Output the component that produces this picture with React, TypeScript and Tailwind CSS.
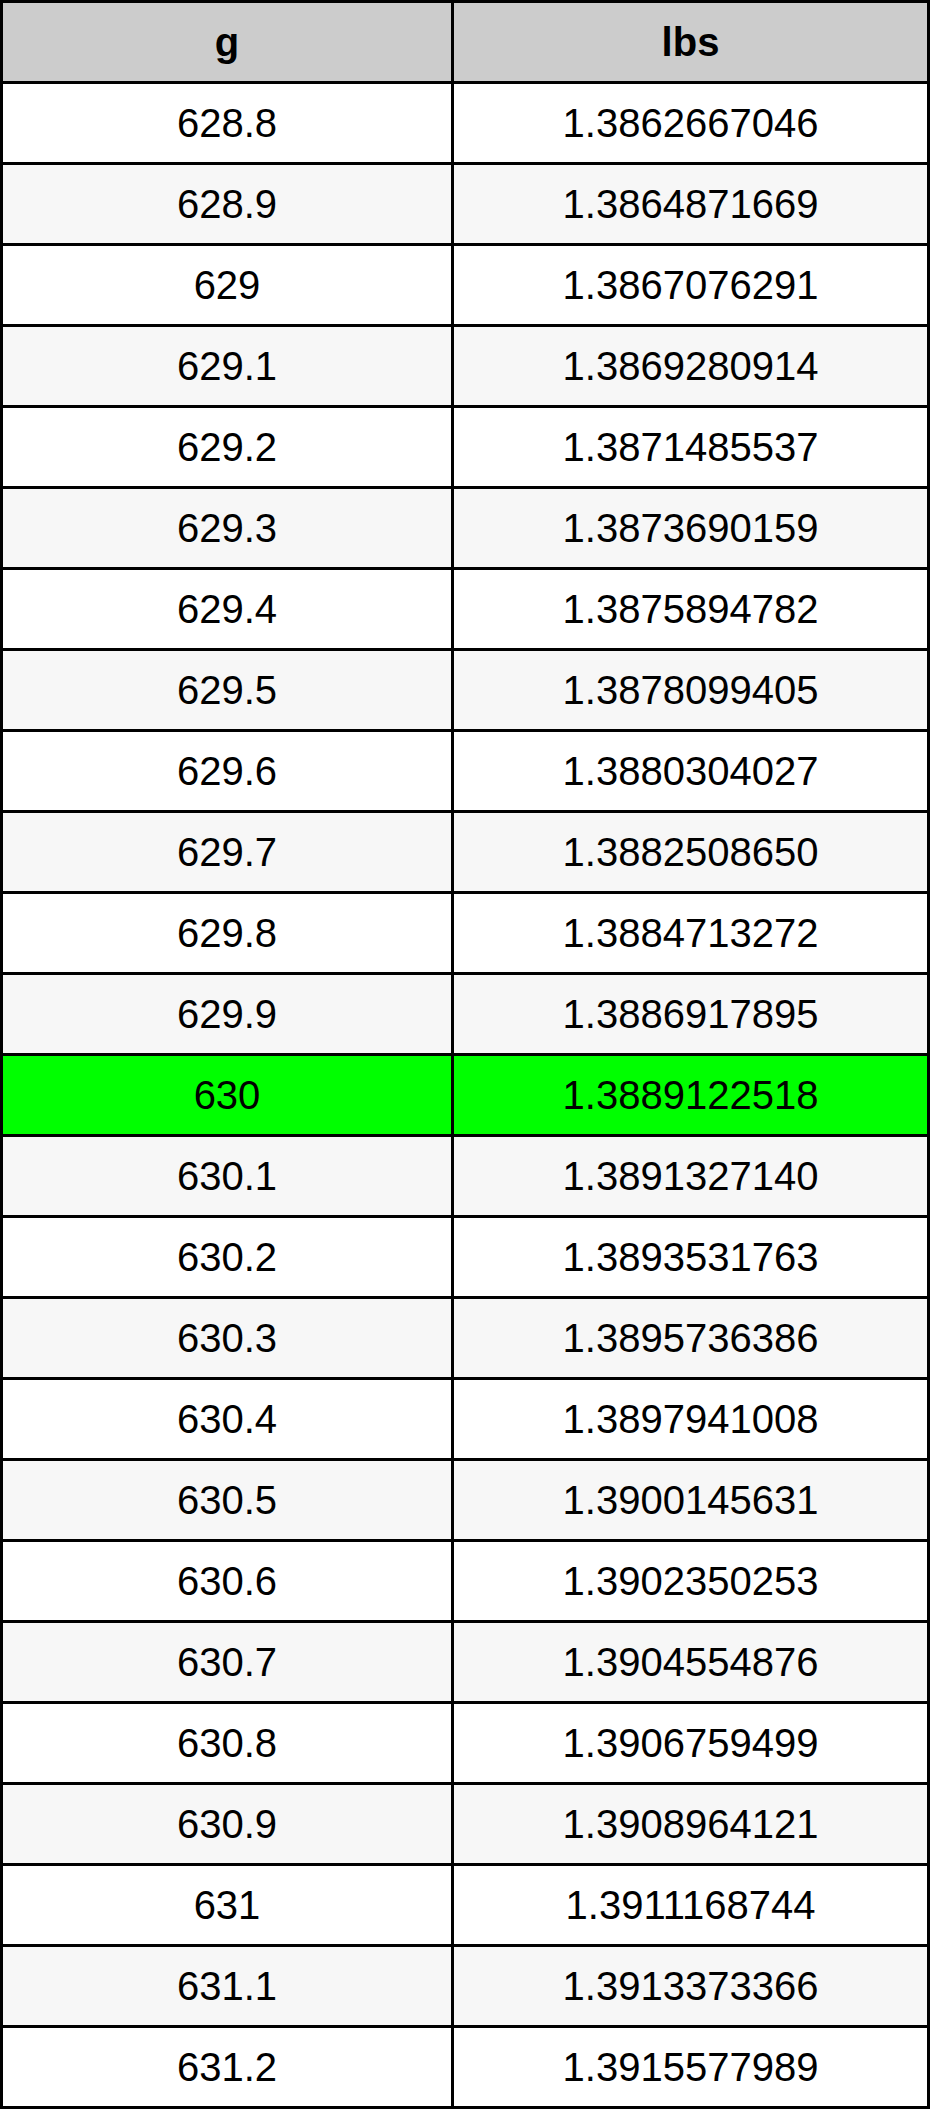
const rows: [string, string][] = [
  ["628.8", "1.3862667046"],
  ["628.9", "1.3864871669"],
  ["629", "1.3867076291"],
  ["629.1", "1.3869280914"],
  ["629.2", "1.3871485537"],
  ["629.3", "1.3873690159"],
  ["629.4", "1.3875894782"],
  ["629.5", "1.3878099405"],
  ["629.6", "1.3880304027"],
  ["629.7", "1.3882508650"],
  ["629.8", "1.3884713272"],
  ["629.9", "1.3886917895"],
  ["630", "1.3889122518"],
  ["630.1", "1.3891327140"],
  ["630.2", "1.3893531763"],
  ["630.3", "1.3895736386"],
  ["630.4", "1.3897941008"],
  ["630.5", "1.3900145631"],
  ["630.6", "1.3902350253"],
  ["630.7", "1.3904554876"],
  ["630.8", "1.3906759499"],
  ["630.9", "1.3908964121"],
  ["631", "1.3911168744"],
  ["631.1", "1.3913373366"],
  ["631.2", "1.3915577989"],
];

const App = () => {
  return (
    <div className="w-[930px] bg-white font-['Liberation_Sans',Arial,sans-serif] text-black">
      <div className="w-[930px] border-t-[3px] border-x-[3px] border-black">
        <div className="flex h-[81px] border-b-[3px] border-black bg-[#cccccc] text-[40px] font-bold">
          <div className="flex w-[451px] items-center justify-center border-r-[3px] border-black">g</div>
          <div className="flex flex-1 items-center justify-center">lbs</div>
        </div>
        {rows.map(([g, lbs], i) => {
          const bg = g === "630" ? "bg-[#00ff00]" : i % 2 === 0 ? "bg-white" : "bg-[#f7f7f7]";
          return (
            <div key={g} className={`flex h-[81px] border-b-[3px] border-black text-[40px] ${bg}`}>
              <div className="flex w-[451px] items-center justify-center border-r-[3px] border-black">{g}</div>
              <div className="flex flex-1 items-center justify-center">{lbs}</div>
            </div>
          );
        })}
      </div>
    </div>
  );
};

export default App;
